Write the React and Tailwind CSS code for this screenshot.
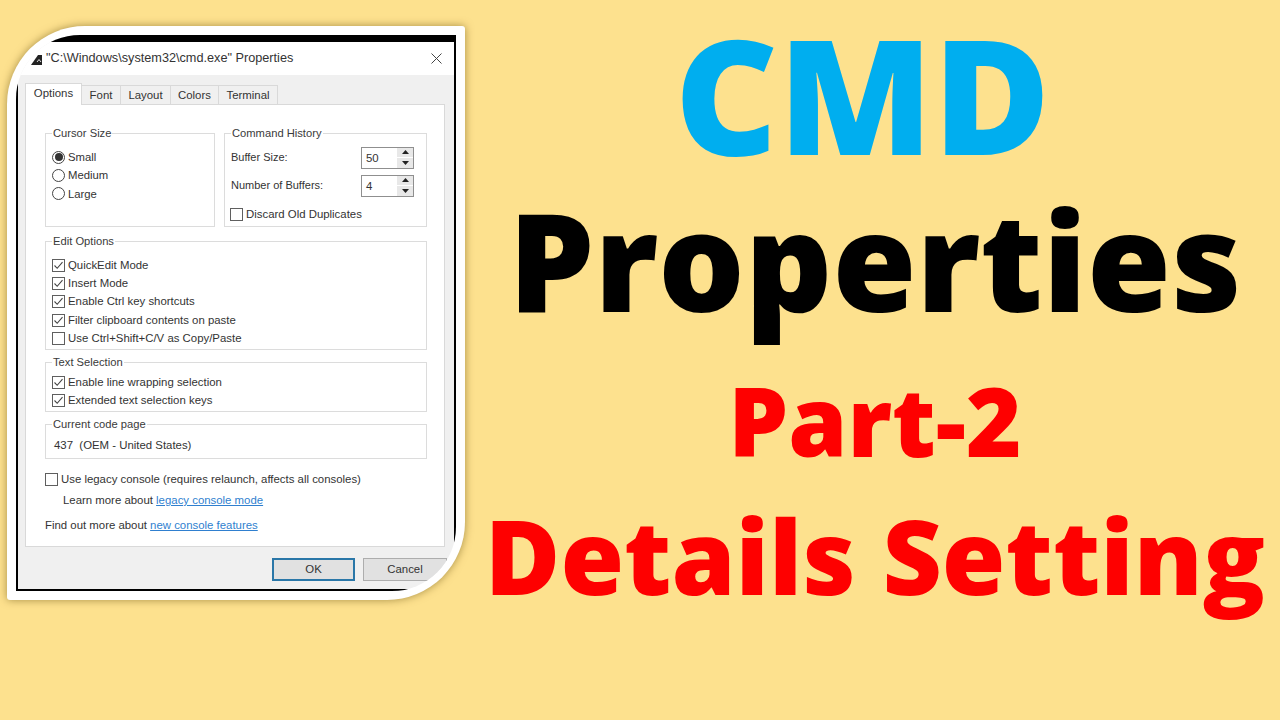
import React from 'react'

const sans = { fontFamily: '"Liberation Sans", Arial, sans-serif' }

function Group({ title, className, bodyClass, children }) {
  return (
    <fieldset className={`border border-[#dcdcdc] ${className}`}>
      <legend className="ml-[6px] px-[1px] text-[11.2px] leading-[14px] text-[#3a3a3a]">{title}</legend>
      <div className={bodyClass}>{children}</div>
    </fieldset>
  )
}

function Check({ label, checked, className = '' }) {
  return (
    <div className={`flex items-center gap-[3px] h-[18.4px] ${className}`}>
      <span className="w-[13px] h-[13px] border border-[#5f5f5f] bg-white flex items-center justify-center shrink-0">
        {checked && (
          <svg width="11" height="11" viewBox="0 0 11 11" fill="none" stroke="#444" strokeWidth="1.1">
            <path d="M1.5 5.5 L4.2 8.3 L9.5 2.2" />
          </svg>
        )}
      </span>
      <span className="text-[11.4px] text-[#333] whitespace-nowrap">{label}</span>
    </div>
  )
}

function Radio({ label, checked }) {
  return (
    <div className="flex items-center gap-[3px] h-[18.4px]">
      <span className="w-[13px] h-[13px] rounded-full border border-[#444] bg-white flex items-center justify-center shrink-0">
        {checked && <span className="w-[8px] h-[8px] rounded-full bg-[#333]" />}
      </span>
      <span className="text-[11.3px] text-[#333]">{label}</span>
    </div>
  )
}

function Spinner({ value }) {
  return (
    <div className="flex w-[53px] h-[22px] border border-[#8f8f8f] bg-white">
      <span className="flex-1 pl-[4px] text-[11.4px] leading-[20px] text-[#333]">{value}</span>
      <div className="w-[16px] flex flex-col gap-[1px] bg-white">
        <span className="flex-1 bg-[#e8e8e8] flex items-center justify-center">
          <svg width="7" height="4" viewBox="0 0 7 4"><path d="M3.5 0 L7 4 H0 Z" fill="#222" /></svg>
        </span>
        <span className="flex-1 bg-[#e8e8e8] flex items-center justify-center">
          <svg width="7" height="4" viewBox="0 0 7 4"><path d="M0 0 H7 L3.5 4 Z" fill="#222" /></svg>
        </span>
      </div>
    </div>
  )
}

function Tab({ label, width, active }) {
  return active ? (
    <div className={`relative z-10 h-[22px] -mb-[1px] bg-white border border-b-0 border-[#d9d9d9] text-center text-[11.4px] leading-[19px] text-[#333] ${width}`}>
      {label}
    </div>
  ) : (
    <div className={`h-[19px] bg-[#f0f0f0] border border-l-0 border-b-0 border-[#d9d9d9] text-center text-[11.4px] leading-[19px] text-[#333] ${width}`}>
      {label}
    </div>
  )
}

function Dialog() {
  return (
    <div className="w-[458px] h-[574px] shrink-0 bg-white rounded-tl-[78px] rounded-br-[78px] rounded-tr-[3px] rounded-bl-[3px] p-[9px] shadow-[0_0_8px_rgba(110,85,20,0.6)]">
      <div className="w-[440px] h-[556px] overflow-hidden rounded-tl-[64px] rounded-br-[64px]">
        <div className="w-full h-full border-l-[2px] border-b-[2px] border-r-[2px] border-t-[7px] border-black bg-[#f0f0f0]" style={sans}>
          <div className="h-[33px] bg-white flex items-center pl-[13px] pr-[12px]">
            <svg width="11" height="12" viewBox="0 0 11 12" className="mr-[4px]">
              <path d="M0 12 L7 2 H11 V12 Z" fill="#222" />
              <path d="M6 9 L8 6.5 L10 9" stroke="#ddd" fill="none" />
            </svg>
            <span className="text-[12.7px] text-[#333] whitespace-nowrap">"C:\Windows\system32\cmd.exe" Properties</span>
            <svg width="11" height="11" viewBox="0 0 11 11" className="ml-auto" stroke="#444" strokeWidth="1" fill="none">
              <path d="M0.5 0.5 L10.5 10.5 M10.5 0.5 L0.5 10.5" />
            </svg>
          </div>

          <div className="pl-[7px] pr-[9px] pt-[8px]">
            <div className="flex items-end h-[21px]">
              <Tab label="Options" width="w-[57px]" active />
              <Tab label="Font" width="w-[39px]" />
              <Tab label="Layout" width="w-[50px]" />
              <Tab label="Colors" width="w-[48px]" />
              <Tab label="Terminal" width="w-[59px]" />
            </div>

            <div className="h-[443px] bg-white border border-[#d9d9d9] pl-[19px] pr-[17px] pt-[21px]">
              <div className="flex gap-[9px]">
                <Group title="Cursor Size" className="w-[170px] h-[101px]" bodyClass="pl-[6px] pt-[8px]">
                  <Radio label="Small" checked />
                  <Radio label="Medium" />
                  <Radio label="Large" />
                </Group>
                <Group title="Command History" className="w-[203px] h-[101px]" bodyClass="pl-[6px] pr-[12px]">
                  <div className="flex items-center justify-between h-[25px] text-[11px] text-[#333] mt-[5px]">
                    <span>Buffer Size:</span>
                    <Spinner value="50" />
                  </div>
                  <div className="flex items-center justify-between h-[25px] text-[11px] text-[#333] mt-[3px]">
                    <span>Number of Buffers:</span>
                    <Spinner value="4" />
                  </div>
                  <Check label="Discard Old Duplicates" className="mt-[7px] -ml-[1px]" />
                </Group>
              </div>

              <Group title="Edit Options" className="mt-[7px] w-[382px] h-[116px]" bodyClass="pl-[6px] pt-[8px]">
                <Check label="QuickEdit Mode" checked />
                <Check label="Insert Mode" checked />
                <Check label="Enable Ctrl key shortcuts" checked />
                <Check label="Filter clipboard contents on paste" checked />
                <Check label="Use Ctrl+Shift+C/V as Copy/Paste" />
              </Group>

              <Group title="Text Selection" className="mt-[5px] w-[382px] h-[57px]" bodyClass="pl-[6px] pt-[4px]">
                <Check label="Enable line wrapping selection" checked />
                <Check label="Extended text selection keys" checked />
              </Group>

              <Group title="Current code page" className="mt-[5px] w-[382px] h-[42px]" bodyClass="pl-[8px]">
                <div className="text-[11.4px] leading-[28px] text-[#333]">437&nbsp; (OEM - United States)</div>
              </Group>

              <Check label="Use legacy console (requires relaunch, affects all consoles)" className="mt-[11px]" />
              <div className="mt-[3px] pl-[18px] text-[11.4px] leading-[18px] text-[#333]">
                Learn more about <span className="text-[#2f7fcf] underline">legacy console mode</span>
              </div>
              <div className="mt-[7px] text-[11.4px] leading-[18px] text-[#333]">
                Find out more about <span className="text-[#2f7fcf] underline">new console features</span>
              </div>
            </div>

            <div className="flex justify-end gap-[8px] mt-[11px] -mr-[2px]">
              <div className="w-[83px] h-[23px] border-2 border-[#2a77a8] bg-[#e1e1e1] text-center text-[11.4px] leading-[19px] text-[#333]">OK</div>
              <div className="w-[84px] h-[23px] border border-[#adadad] bg-[#e1e1e1] text-center text-[11.4px] leading-[21px] text-[#333]">Cancel</div>
            </div>
          </div>
        </div>
      </div>
    </div>
  )
}

export default function App() {
  return (
    <div className="w-[1280px] h-[720px] overflow-hidden bg-[#fde18e] flex items-start pl-[7px] pt-[26px]">
      <Dialog />
      <div className="flex-1 flex flex-col items-center -mt-[13px] pl-[5px]" style={{ fontFamily: '"Open Sans", sans-serif' }}>
        <div className="text-[160px] leading-[160px] font-extrabold text-[#00aeef] mr-[25px]">CMD</div>
        <div className="text-[136px] leading-[130px] font-extrabold text-black mt-[22px]">Properties</div>
        <div className="text-[95px] leading-[100px] font-extrabold text-[#fe0000] mt-[45px]">Part-2</div>
        <div className="text-[103px] leading-[110px] font-extrabold text-[#fe0000] whitespace-nowrap mt-[30px]">Details Setting</div>
      </div>
    </div>
  )
}
